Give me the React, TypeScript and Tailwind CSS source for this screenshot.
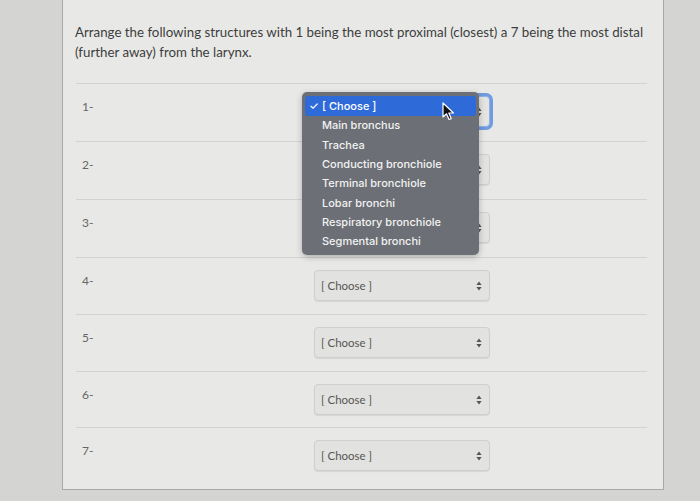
import React from "react";

const rows = [
  { n: "1-", h: "h-[58px]", focused: true },
  { n: "2-", h: "h-[58px]", focused: false },
  { n: "3-", h: "h-[58px]", focused: false },
  { n: "4-", h: "h-[57px]", focused: false },
  { n: "5-", h: "h-[57px]", focused: false },
  { n: "6-", h: "h-[56px]", focused: false },
  { n: "7-", h: "h-[62px]", focused: false },
];

const options = [
  "Main bronchus",
  "Trachea",
  "Conducting bronchiole",
  "Terminal bronchiole",
  "Lobar bronchi",
  "Respiratory bronchiole",
  "Segmental bronchi",
];

function Arrows() {
  return (
    <svg width="6" height="10" viewBox="0 0 6 10" className="shrink-0">
      <path d="M3 0.5 L5.6 4 L0.4 4 Z" fill="#555" />
      <path d="M3 9.5 L5.6 6 L0.4 6 Z" fill="#555" />
    </svg>
  );
}

function Cursor() {
  return (
    <svg width="13" height="19" viewBox="0 0 13 19" className="absolute left-[137px] top-[6px]">
      <path
        d="M1 1 L1 15 L4.5 11.8 L7 17.5 L9.2 16.6 L6.8 11 L11.5 11 Z"
        fill="#111"
        stroke="#fff"
        strokeWidth="1.2"
        strokeLinejoin="round"
      />
    </svg>
  );
}

function Menu() {
  return (
    <div
      className="absolute left-[-12px] top-[-4px] z-10 w-[177px] rounded-[5px] bg-[#6c6f75] px-[3px] pt-[4px] pb-[4px] shadow-[0_2px_6px_rgba(0,0,0,0.25)]"
      style={{ fontFamily: "Inter, 'Liberation Sans', sans-serif" }}
    >
      <div className="relative flex h-[20px] items-center rounded-[3px] bg-[#2f6bd8] pl-[4px] text-[11px] font-medium text-white">
        <span className="w-[13px] text-[11px]">✓</span>
        <span>[ Choose ]</span>
        <Cursor />
      </div>
      {options.map((o) => (
        <div key={o} className="flex h-[19.3px] items-center pl-[17px] text-[11px] font-medium text-[#f2f2f2]">
          {o}
        </div>
      ))}
    </div>
  );
}

function Select({ focused }: { focused: boolean }) {
  return (
    <div className="relative">
      <div
        className={
          focused
            ? "flex h-[31px] w-[176px] items-center justify-between rounded-[4px] border border-[#8fb0e0] bg-[#e4e5e2] pl-[6px] pr-[7px] ring-[3px] ring-[#6f9be0]"
            : "flex h-[31px] w-[176px] items-center justify-between rounded-[4px] border border-[#cfd0cd] bg-[#e2e3e0] pl-[6px] pr-[7px] shadow-[0_1px_1px_rgba(0,0,0,0.08)]"
        }
      >
        <span className="text-[11.5px] text-[#555]">[ Choose ]</span>
        <Arrows />
      </div>
      {focused && <Menu />}
    </div>
  );
}

export default function App() {
  return (
    <div
      className="h-[501px] w-[700px] overflow-hidden bg-[#d4d5d2]"
      style={{ fontFamily: "Lato, 'Open Sans', sans-serif" }}
    >
      <div className="ml-[62px] h-[490px] w-[602px] border-b border-l border-r border-[#a9aaa7] bg-[#e8e9e6]">
        <div className="pl-[12px] pt-[22px] text-[13.3px] leading-[20px] text-[#3d3d3d]">
          <div className="whitespace-nowrap">
            Arrange the following structures with 1 being the most proximal (closest) a 7 being the most distal
          </div>
          <div className="whitespace-nowrap">(further away) from the larynx.</div>
        </div>
        <div className="ml-[13px] mr-[16px] mt-[21px]">
          {rows.map((r) => (
            <div key={r.n} className={`flex border-t border-[#d2d3d0] ${r.h}`}>
              <div className="w-[238px] pl-[6px] pt-[15px] text-[12px] leading-[16px] text-[#666]">
                {r.n}
              </div>
              <div className="pt-[12px]">
                <Select focused={r.focused} />
              </div>
            </div>
          ))}
        </div>
      </div>
    </div>
  );
}
